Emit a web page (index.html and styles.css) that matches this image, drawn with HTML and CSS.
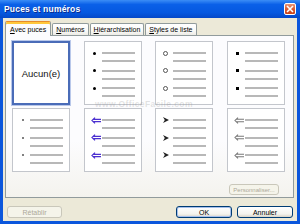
FILE: index.html
```html
<!DOCTYPE html>
<html lang="fr">
<head>
    <meta charset="UTF-8">
    <title>Puces et numéros</title>
    <link rel="stylesheet" href="styles.css">
</head>
<body>
    <div class="window">
        <div class="titlebar">
            <span class="title">Puces et numéros</span>
            <span class="close">
                <svg width="8" height="8" viewBox="0 0 8 8"><path d="M1 1 L7 7 M7 1 L1 7" stroke="#fff" stroke-width="1.6"/></svg>
            </span>
        </div>

        <div class="client">
            <div class="tabs">
                <div class="tab active"><u>A</u>vec puces</div>
                <div class="tab"><u>N</u>uméros</div>
                <div class="tab"><u>H</u>iérarchisation</div>
                <div class="tab"><u>S</u>tyles de liste</div>
            </div>

            <div class="panel">
                <div class="grid">
                    <div class="cell none selected">Aucun(e)</div>

                    <div class="cell">
                        <div class="item"><span class="mark"><b class="dot"></b></span><span class="lines"><i></i><i></i></span></div>
                        <div class="item"><span class="mark"><b class="dot"></b></span><span class="lines"><i></i><i></i></span></div>
                        <div class="item"><span class="mark"><b class="dot"></b></span><span class="lines"><i></i><i></i></span></div>
                    </div>

                    <div class="cell">
                        <div class="item"><span class="mark"><b class="circle"></b></span><span class="lines"><i></i><i></i></span></div>
                        <div class="item"><span class="mark"><b class="circle"></b></span><span class="lines"><i></i><i></i></span></div>
                        <div class="item"><span class="mark"><b class="circle"></b></span><span class="lines"><i></i><i></i></span></div>
                    </div>

                    <div class="cell">
                        <div class="item"><span class="mark"><b class="square"></b></span><span class="lines"><i></i><i></i></span></div>
                        <div class="item"><span class="mark"><b class="square"></b></span><span class="lines"><i></i><i></i></span></div>
                        <div class="item"><span class="mark"><b class="square"></b></span><span class="lines"><i></i><i></i></span></div>
                    </div>

                    <div class="cell">
                        <div class="item"><span class="mark"><b class="tiny"></b></span><span class="lines"><i></i><i></i></span></div>
                        <div class="item"><span class="mark"><b class="tiny"></b></span><span class="lines"><i></i><i></i></span></div>
                        <div class="item"><span class="mark"><b class="tiny"></b></span><span class="lines"><i></i><i></i></span></div>
                    </div>

                    <div class="cell">
                        <div class="item"><span class="mark"><svg class="arrow" width="10" height="7" viewBox="0 0 10 7"><path d="M4 0.6 L1 3.5 L4 6.4 M2 2.3 H10 M2 4.7 H10" fill="none" stroke="#4b2fd0" stroke-width="1.2"/></svg></span><span class="lines"><i></i><i></i></span></div>
                        <div class="item"><span class="mark"><svg class="arrow" width="10" height="7" viewBox="0 0 10 7"><path d="M4 0.6 L1 3.5 L4 6.4 M2 2.3 H10 M2 4.7 H10" fill="none" stroke="#4b2fd0" stroke-width="1.2"/></svg></span><span class="lines"><i></i><i></i></span></div>
                        <div class="item"><span class="mark"><svg class="arrow" width="10" height="7" viewBox="0 0 10 7"><path d="M4 0.6 L1 3.5 L4 6.4 M2 2.3 H10 M2 4.7 H10" fill="none" stroke="#4b2fd0" stroke-width="1.2"/></svg></span><span class="lines"><i></i><i></i></span></div>
                    </div>

                    <div class="cell">
                        <div class="item"><span class="mark"><svg width="6" height="6" viewBox="0 0 6 6"><polygon points="0,0 6,3 0,6 1.8,3" fill="#222"/></svg></span><span class="lines"><i></i><i></i></span></div>
                        <div class="item"><span class="mark"><svg width="6" height="6" viewBox="0 0 6 6"><polygon points="0,0 6,3 0,6 1.8,3" fill="#222"/></svg></span><span class="lines"><i></i><i></i></span></div>
                        <div class="item"><span class="mark"><svg width="6" height="6" viewBox="0 0 6 6"><polygon points="0,0 6,3 0,6 1.8,3" fill="#222"/></svg></span><span class="lines"><i></i><i></i></span></div>
                    </div>

                    <div class="cell">
                        <div class="item"><span class="mark"><svg class="arrow" width="10" height="7" viewBox="0 0 10 7"><path d="M4 0.6 L1 3.5 L4 6.4 M2 2.3 H10 M2 4.7 H10" fill="none" stroke="#7a7a7a" stroke-width="1.1"/></svg></span><span class="lines"><i></i><i></i></span></div>
                        <div class="item"><span class="mark"><svg class="arrow" width="10" height="7" viewBox="0 0 10 7"><path d="M4 0.6 L1 3.5 L4 6.4 M2 2.3 H10 M2 4.7 H10" fill="none" stroke="#7a7a7a" stroke-width="1.1"/></svg></span><span class="lines"><i></i><i></i></span></div>
                        <div class="item"><span class="mark"><svg class="arrow" width="10" height="7" viewBox="0 0 10 7"><path d="M4 0.6 L1 3.5 L4 6.4 M2 2.3 H10 M2 4.7 H10" fill="none" stroke="#7a7a7a" stroke-width="1.1"/></svg></span><span class="lines"><i></i><i></i></span></div>
                    </div>
                </div>

                <div class="panel-actions">
                    <button class="btn small" disabled>Personnaliser...</button>
                </div>

                <div class="watermark">www.OfficeFacile.com</div>
            </div>

            <div class="footer">
                <button class="btn" disabled>Rétablir</button>
                <span class="spacer"></span>
                <button class="btn default">OK</button>
                <button class="btn">Annuler</button>
            </div>
        </div>
    </div>
</body>
</html>
```

FILE: styles.css
```css
body {
    margin: 0;
    font-family: "Liberation Sans", Arial, sans-serif;
    background: #fff;
}
.window {
    width: 300px;
    height: 224px;
    box-sizing: border-box;
    padding: 0 3px 3px;
    background: #0b56dc;
    display: flex;
    flex-direction: column;
}
.titlebar {
    height: 18px;
    margin: 0 -3px;
    padding: 0 4px 0 4px;
    background: linear-gradient(#3b8df6, #0a60e8 25%, #0558e0 70%, #0448c8);
    display: flex;
    align-items: center;
    justify-content: space-between;
    flex: none;
}
.title {
    color: #fff;
    font-weight: bold;
    font-size: 8.5px;
    letter-spacing: 0.2px;
    text-shadow: 1px 1px #0b2a8a;
}
.close {
    width: 12px;
    height: 12px;
    box-sizing: border-box;
    border: 1px solid #fff;
    border-radius: 2px;
    background: linear-gradient(#ea9677, #dc5b31 50%, #c8421a);
    display: flex;
    align-items: center;
    justify-content: center;
}
.client {
    flex: 1;
    background: #ece9d8;
    display: flex;
    flex-direction: column;
    padding: 3px 3px 0 2px;
}
.tabs {
    display: flex;
    align-items: flex-end;
    height: 14px;
    position: relative;
    z-index: 1;
    flex: none;
}
.tab {
    font-size: 7px;
    height: 12px;
    box-sizing: border-box;
    padding: 0 3px;
    margin-right: 1px;
    border: 1px solid #919b9c;
    border-bottom: none;
    border-radius: 2px 2px 0 0;
    background: linear-gradient(#fff, #fafaf8 60%, #ecebe5);
    display: flex;
    align-items: center;
    color: #000;
    white-space: nowrap;
}
.tab.active {
    height: 15px;
    margin-bottom: -1px;
    padding: 0 4px;
    border-top-color: #e68b2c;
    box-shadow: inset 0 2px #ffc83c;
    background: #fcfcfe;
}
.panel {
    height: 163px;
    flex: none;
    box-sizing: border-box;
    border: 1px solid #919b9c;
    background: linear-gradient(#fcfcfe, #fcfcfe 65%, #f4f3ee);
    padding: 5px 14px 0 6px;
    position: relative;
}
.grid {
    display: grid;
    grid-template-columns: repeat(4, 58px);
    grid-auto-rows: 64px;
    column-gap: 13.5px;
    row-gap: 3px;
}
.cell {
    border: 1px solid #c3c6cc;
    background: #fff;
    box-sizing: border-box;
    padding-top: 10px;
}
.cell.selected {
    border: 2px solid #4a6cb8;
    box-shadow: 0 0 0 1px #b9c8ea;
}
.none {
    padding: 0;
    display: flex;
    align-items: center;
    justify-content: center;
    font-size: 9.5px;
    color: #111;
}
.item {
    display: flex;
    height: 17.5px;
}
.mark {
    width: 15px;
    padding-left: 2px;
    height: 2px;
    flex: none;
    display: flex;
    align-items: center;
    justify-content: center;
}
.mark svg {
    flex: none;
}
.mark .arrow {
    margin-left: 4px;
}
.lines {
    flex: 1;
    margin-right: 6px;
    display: flex;
    flex-direction: column;
    gap: 6px;
}
.lines i {
    display: block;
    height: 2px;
    background: #b8b8b8;
}
.dot {
    width: 3px;
    height: 3px;
    border-radius: 50%;
    background: #000;
    flex: none;
}
.circle {
    width: 3px;
    height: 3px;
    border: 1px solid #555;
    border-radius: 50%;
    flex: none;
}
.square {
    width: 3px;
    height: 3px;
    background: #000;
    flex: none;
}
.tiny {
    width: 2px;
    height: 2px;
    background: #808080;
    flex: none;
}
.panel-actions {
    display: flex;
    justify-content: flex-end;
    margin-top: 12px;
}
.watermark {
    position: absolute;
    left: 89px;
    top: 63px;
    font-size: 8.5px;
    font-weight: bold;
    letter-spacing: 0.4px;
    color: rgba(140, 140, 140, 0.25);
    white-space: nowrap;
}
.footer {
    display: flex;
    align-items: flex-start;
    padding: 8px 1px 0 2px;
}
.spacer {
    flex: 1;
}
.btn {
    width: 56px;
    height: 12px;
    box-sizing: border-box;
    margin: 0 0 0 5px;
    padding: 0;
    font-family: "Liberation Sans", Arial, sans-serif;
    font-size: 7px;
    color: #000;
    border: 1px solid #003c74;
    border-radius: 3px;
    background: linear-gradient(#fff, #f4f3ee 70%, #d8d2c6);
}
.footer .btn:first-child {
    margin-left: 0;
    width: 55px;
}
.btn.default {
    box-shadow: inset 0 0 0 1px #a6c0ec;
}
.btn:disabled {
    color: #aca899;
    border-color: #c9c7ba;
    background: #f5f4ea;
}
.btn.small {
    width: 50px;
    height: 11px;
    font-size: 6px;
    margin: 0;
}
```
